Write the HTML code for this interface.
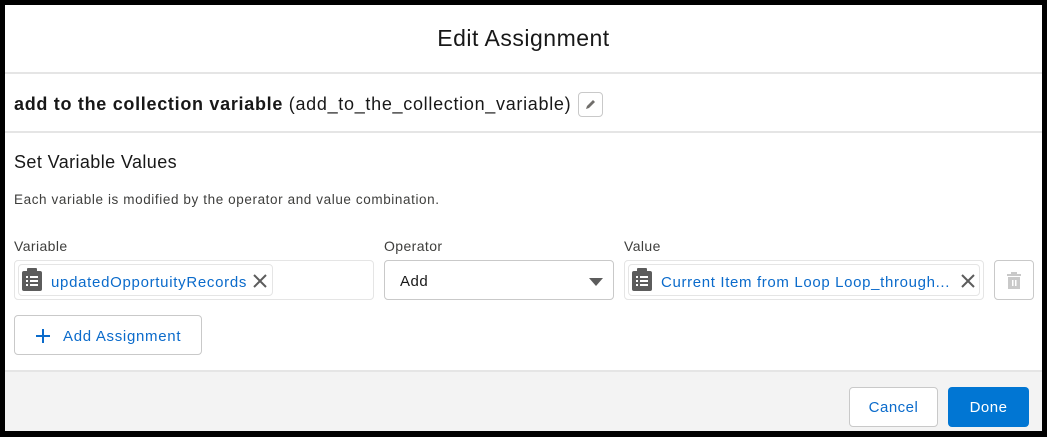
<!DOCTYPE html><html><head><style>
*{box-sizing:border-box;margin:0;padding:0}
body{width:1047px;height:437px;background:#000;font-family:"Liberation Sans",sans-serif;position:relative;overflow:hidden;color:#181818}
.a{position:absolute;white-space:nowrap}
.card{left:5px;top:5px;width:1037px;height:426px;background:#fff}
.pill{border:1px solid #e5e5e5;border-radius:4px;background:#fff}
.blue{color:#0b6bcb}
</style></head><body>
<div class="a card"></div>
<div class="a" style="left:5px;top:25px;width:1037px;text-align:center;font-size:23px;letter-spacing:0.5px">Edit Assignment</div>
<div class="a" style="left:5px;top:72px;width:1037px;height:2px;background:#e5e5e5"></div>
<div class="a" style="left:14px;top:94px;font-size:18px;letter-spacing:0.7px"><b>add to the collection variable</b> (add_to_the_collection_variable)</div>
<div class="a" style="left:578px;top:92px;width:25px;height:25px;border:1px solid #c9c9c9;border-radius:4px;background:#fff">
<svg width="23" height="23" viewBox="0 0 23 23"><path d="M7 16l1-3 6-6 2 2-6 6z" fill="#706e6b"/></svg></div>
<div class="a" style="left:5px;top:131px;width:1037px;height:2px;background:#e5e5e5"></div>
<div class="a" style="left:14px;top:152px;font-size:18px;letter-spacing:0.4px">Set Variable Values</div>
<div class="a" style="left:14px;top:192px;font-size:13.5px;letter-spacing:0.6px;color:#3e3e3c">Each variable is modified by the operator and value combination.</div>
<div class="a" style="left:14px;top:238px;font-size:14px;letter-spacing:0.4px;color:#3e3e3c">Variable</div>
<div class="a" style="left:384px;top:238px;font-size:14px;letter-spacing:0.4px;color:#3e3e3c">Operator</div>
<div class="a" style="left:624px;top:238px;font-size:14px;letter-spacing:0.4px;color:#3e3e3c">Value</div>
<div class="a pill" style="left:14px;top:260px;width:360px;height:40px"></div>
<div class="a pill" style="left:18px;top:264px;width:255px;height:32px"></div>
<svg class="a" style="left:21px;top:268px" width="22" height="24" viewBox="0 0 22 24"><rect x="1" y="3" width="20" height="20" rx="2" fill="#5c5c5c"/><rect x="6" y="0" width="10" height="5" rx="1" fill="#5c5c5c"/><g fill="#fff"><rect x="5" y="8" width="2" height="2"/><rect x="9" y="8" width="8" height="2"/><rect x="5" y="12" width="2" height="2"/><rect x="9" y="12" width="8" height="2"/><rect x="5" y="16" width="2" height="2"/><rect x="9" y="16" width="8" height="2"/></g></svg>
<div class="a blue" style="left:51px;top:274px;font-size:15px;letter-spacing:0.7px">updatedOpportuityRecords</div>
<svg class="a" style="left:253px;top:274px" width="14" height="14"><path d="M1 1L13 13M13 1L1 13" stroke="#5c5c5c" stroke-width="2"/></svg>
<div class="a" style="left:384px;top:260px;width:230px;height:40px;border:1px solid #c9c9c9;border-radius:4px"></div>
<div class="a" style="left:400px;top:273px;font-size:15px;letter-spacing:0.5px">Add</div>
<svg class="a" style="left:589px;top:278px" width="14" height="8"><path d="M0 0H14L7 8z" fill="#5c5c5c"/></svg>
<div class="a pill" style="left:624px;top:260px;width:360px;height:40px"></div>
<div class="a pill" style="left:628px;top:264px;width:352px;height:32px"></div>
<svg class="a" style="left:631px;top:268px" width="22" height="24" viewBox="0 0 22 24"><rect x="1" y="3" width="20" height="20" rx="2" fill="#5c5c5c"/><rect x="6" y="0" width="10" height="5" rx="1" fill="#5c5c5c"/><g fill="#fff"><rect x="5" y="8" width="2" height="2"/><rect x="9" y="8" width="8" height="2"/><rect x="5" y="12" width="2" height="2"/><rect x="9" y="12" width="8" height="2"/><rect x="5" y="16" width="2" height="2"/><rect x="9" y="16" width="8" height="2"/></g></svg>
<div class="a blue" style="left:661px;top:274px;font-size:15px;letter-spacing:0.65px">Current Item from Loop Loop_through...</div>
<svg class="a" style="left:961px;top:274px" width="14" height="14"><path d="M1 1L13 13M13 1L1 13" stroke="#5c5c5c" stroke-width="2"/></svg>
<div class="a" style="left:994px;top:260px;width:40px;height:40px;border:1px solid #c9c9c9;border-radius:4px"></div>
<svg class="a" style="left:1006px;top:272px" width="16" height="18"><rect x="1" y="2" width="14" height="2" fill="#c9c9c9"/><rect x="5" y="0" width="6" height="2" fill="#c9c9c9"/><rect x="2" y="5" width="12" height="12" fill="#c9c9c9"/><rect x="6" y="8" width="1.5" height="6" fill="#fff"/><rect x="9" y="8" width="1.5" height="6" fill="#fff"/></svg>
<div class="a" style="left:14px;top:315px;width:188px;height:40px;border:1px solid #c9c9c9;border-radius:4px"></div>
<svg class="a" style="left:36px;top:329px" width="14" height="14"><path d="M7 0V14M0 7H14" stroke="#0b6bcb" stroke-width="2"/></svg>
<div class="a blue" style="left:63px;top:328px;font-size:15px;letter-spacing:0.7px">Add Assignment</div>
<div class="a" style="left:5px;top:370px;width:1037px;height:61px;background:#f3f3f3;border-top:2px solid #e5e5e5"></div>
<div class="a" style="left:849px;top:387px;width:89px;height:40px;background:#fff;border:1px solid #c9c9c9;border-radius:4px;text-align:center;line-height:40px;font-size:15px;letter-spacing:0.5px;color:#0b6bcb">Cancel</div>
<div class="a" style="left:948px;top:387px;width:81px;height:40px;background:#0176d3;border-radius:4px;text-align:center;line-height:42px;font-size:15px;letter-spacing:0.5px;color:#fff">Done</div>
</body></html>
